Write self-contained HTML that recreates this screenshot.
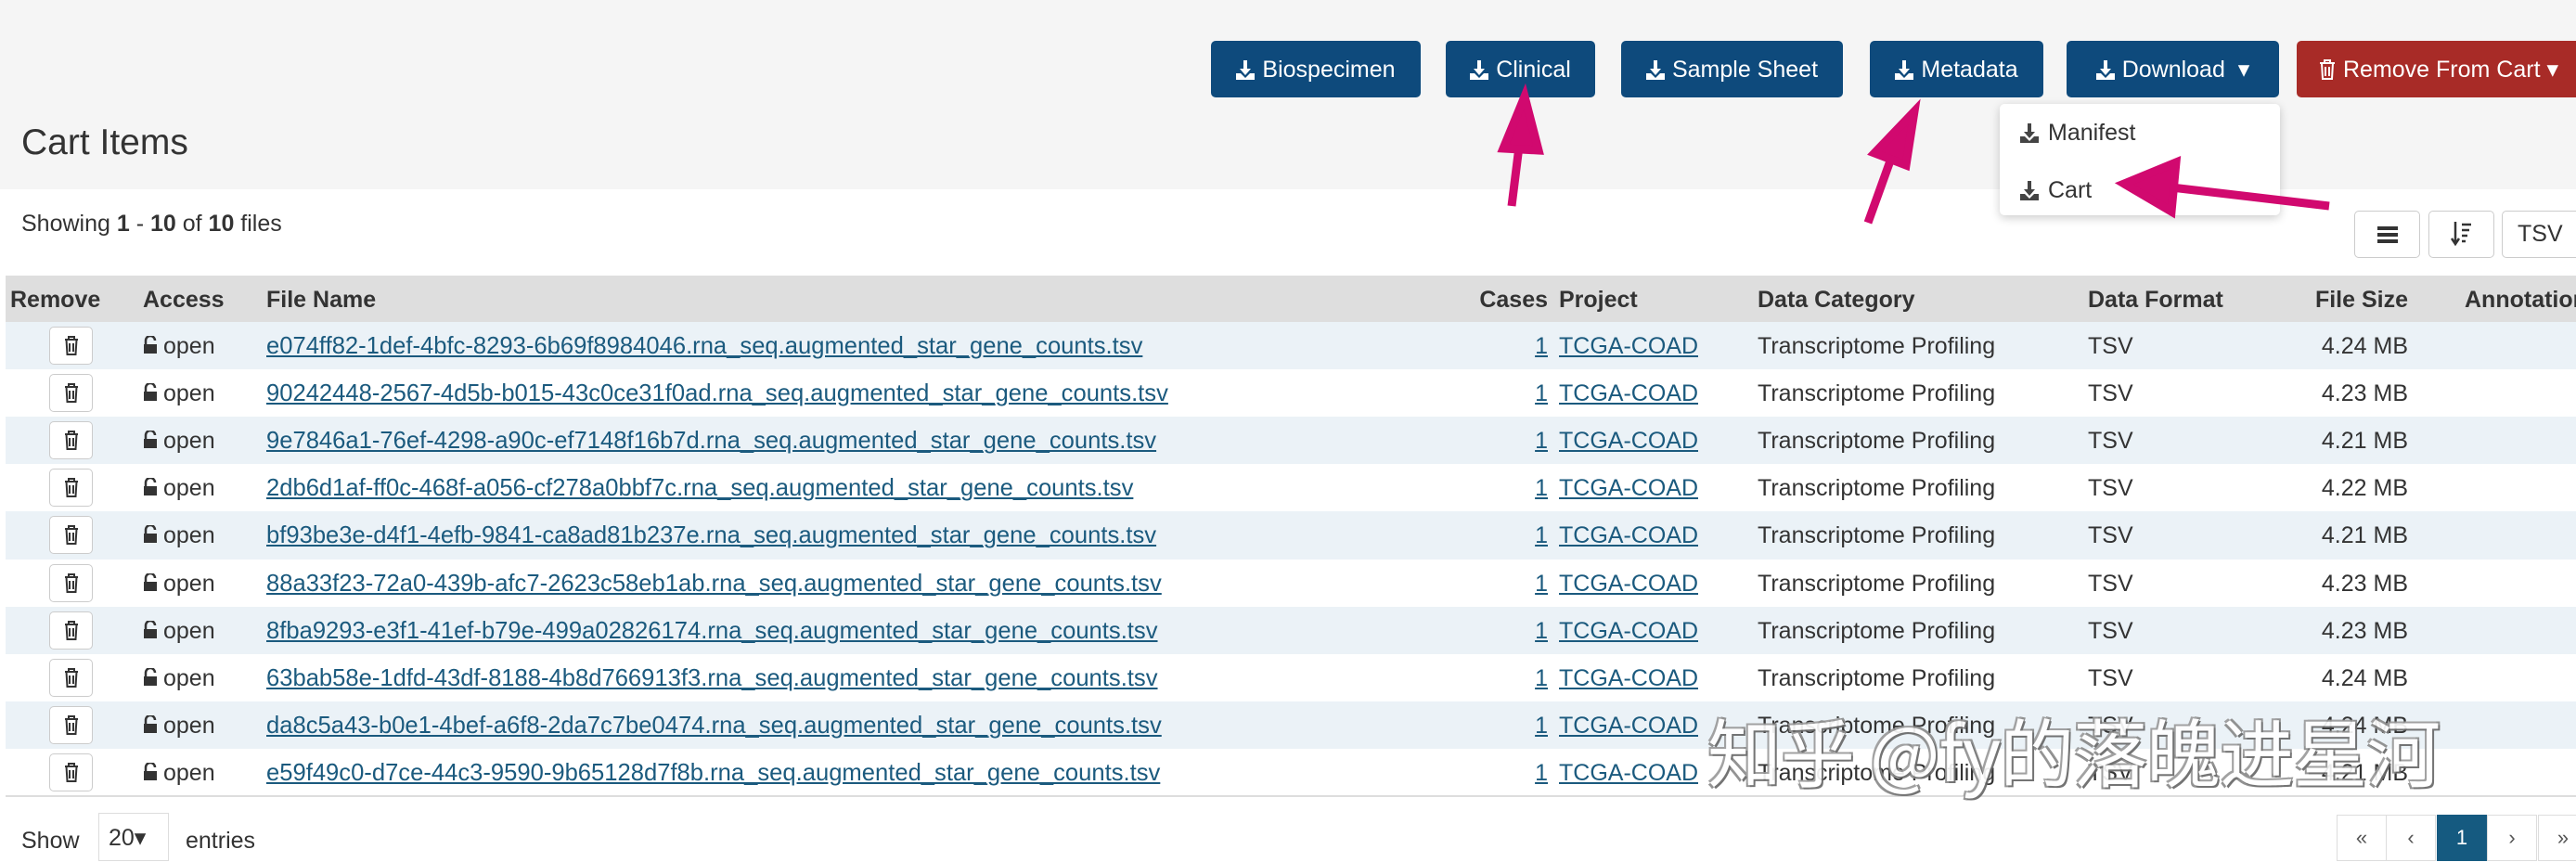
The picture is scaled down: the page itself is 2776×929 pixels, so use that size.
<!DOCTYPE html>
<html><head><meta charset="utf-8">
<style>
*{box-sizing:border-box;margin:0;padding:0}
body{width:2776px;height:925px;overflow:hidden;background:#fff;font-family:"Liberation Sans",Arial,sans-serif;color:#333;position:relative}
.top{position:absolute;left:0;top:0;width:2776px;height:204px;background:#f5f5f5}
.btn{position:absolute;top:44px;height:61px;background:#0e4a7c;color:#fff;border-radius:5px;font-size:25px;line-height:63px;text-align:center;white-space:nowrap}
.btn svg{vertical-align:-3px;margin-right:8px}
.red{background:#a82b27}
.dd{position:absolute;left:2155px;top:112px;width:302px;height:120px;background:#fff;border-radius:5px;box-shadow:0 3px 10px rgba(0,0,0,.2);font-size:25px}
.dd div{position:absolute;left:22px}
h1{position:absolute;left:23px;top:132px;font-size:39px;font-weight:normal;color:#333}
.show{position:absolute;left:23px;top:227px;font-size:25px}
.ib{position:absolute;top:227px;height:51px;border:1px solid #ccc;border-radius:5px;background:#fff;font-size:25px;line-height:49px;text-align:center}
.hdr{position:absolute;left:6px;top:297px;width:2770px;height:50px;background:#dedede}
.hd{position:absolute;top:309px;font-size:25px;font-weight:bold;color:#333}
.row{position:absolute;left:6px;width:2770px;height:51.3px}
.row.s{background:#ebf2f7}
.c{position:absolute;font-size:25px;white-space:nowrap;line-height:53px}
.fn{font-size:25.6px}
a{color:#1b5a7e;text-decoration:underline}
.tb{position:absolute;left:47px;top:5px;width:47px;height:41px;border:1px solid #ccc;border-radius:5px;background:#fff}
.tb svg{position:absolute;left:15px;top:9px}
.pg{position:absolute;top:878px;height:50px;width:54px;border:1px solid #ddd;background:#fff;text-align:center;line-height:48px;font-size:22px;color:#555}
.wm{position:absolute;left:1840px;top:750px;font-size:80px;color:#fff;font-family:"Noto Sans CJK SC",sans-serif;text-shadow:2px 2px 0 #666,-2px -2px 0 #999,2px -2px 0 #888,-2px 2px 0 #888;letter-spacing:-1px;white-space:nowrap;opacity:.9}
</style></head><body>
<div class="top"></div>
<svg width="0" height="0" style="position:absolute"><defs><g id="dl"><path d="M8 0h4v9h4l-6 7-6-7h4z" fill="currentColor"/><path d="M0 14h5l5 5 5-5h5v7H0z" fill="currentColor"/></g></defs></svg>
<div class="btn" style="left:1305px;width:226px"><svg width="20" height="21" style="color:#fff"><use href="#dl"/></svg>Biospecimen</div>
<div class="btn" style="left:1558px;width:161px"><svg width="20" height="21" style="color:#fff"><use href="#dl"/></svg>Clinical</div>
<div class="btn" style="left:1747px;width:239px"><svg width="20" height="21" style="color:#fff"><use href="#dl"/></svg>Sample Sheet</div>
<div class="btn" style="left:2015px;width:187px"><svg width="20" height="21" style="color:#fff"><use href="#dl"/></svg>Metadata</div>
<div class="btn" style="left:2227px;width:229px"><svg width="20" height="21" style="color:#fff"><use href="#dl"/></svg>Download &nbsp;▾</div>
<div class="btn red" style="left:2475px;width:320px;text-align:left;padding-left:24px"><svg width="18" height="22" style="color:#fff"><path d="M1 4h16M6 4V1h6v3M3 4l1 17h10l1-17M7 8v10M11 8v10" stroke="#fff" stroke-width="2" fill="none"/></svg>Remove From Cart ▾</div>
<div class="dd">
<div style="top:17px"><svg width="20" height="21" style="color:#444;vertical-align:-3px;margin-right:10px"><use href="#dl"/></svg>Manifest</div>
<div style="top:79px"><svg width="20" height="21" style="color:#444;vertical-align:-3px;margin-right:10px"><use href="#dl"/></svg>Cart</div>
</div>
<h1>Cart Items</h1>
<div class="show">Showing <b>1</b> - <b>10</b> of <b>10</b> files</div>
<div class="ib" style="left:2537px;width:71px"><svg width="22" height="18" style="vertical-align:-2px"><path d="M0 2h22M0 9h22M0 16h22" stroke="#333" stroke-width="4"/></svg></div>
<div class="ib" style="left:2617px;width:71px"><svg width="24" height="26" style="vertical-align:-5px"><path d="M5 0v22M1 18l4 6 4-6" stroke="#333" stroke-width="2.5" fill="none"/><path d="M12 3h10M12 9h8M12 15h6M12 21h4" stroke="#333" stroke-width="2.5"/></svg></div>
<div class="ib" style="left:2696px;width:90px;text-align:left;padding-left:16px">TSV</div>
<div class="hdr"></div>
<div class="hd" style="left:11px">Remove</div>
<div class="hd" style="left:154px">Access</div>
<div class="hd" style="left:287px">File Name</div>
<div class="hd" style="left:1578px;width:90px;text-align:right">Cases</div>
<div class="hd" style="left:1680px">Project</div>
<div class="hd" style="left:1894px">Data Category</div>
<div class="hd" style="left:2250px">Data Format</div>
<div class="hd" style="left:2440px;width:155px;text-align:right">File Size</div>
<div class="hd" style="left:2656px">Annotations</div>
<div id="rows"></div>
<div style="position:absolute;left:6px;top:857px;width:2770px;height:2px;background:#ddd"></div>
<div style="position:absolute;left:23px;top:892px;font-size:25px">Show</div>
<div style="position:absolute;left:106px;top:876px;width:76px;height:52px;border:1px solid #ddd;font-size:25px;line-height:52px;padding-left:10px">20▾</div>
<div style="position:absolute;left:200px;top:892px;font-size:25px">entries</div>
<div class="pg" style="left:2518px">«</div>
<div class="pg" style="left:2571px">‹</div>
<div class="pg" style="left:2626px;background:#155a80;color:#fff;border-color:#155a80">1</div>
<div class="pg" style="left:2680px">›</div>
<div class="pg" style="left:2735px">»</div>
<div class="wm">知乎 @fy的落魄进星河</div>
<svg style="position:absolute;left:0;top:0" width="2776" height="925">
<g stroke="#d1096f" stroke-width="9" fill="#d1096f">
<line x1="1629" y1="222" x2="1638" y2="150"/><polygon points="1643,104 1620,160 1658,162"/>
<line x1="2013" y1="240" x2="2040" y2="165"/><polygon points="2063,120 2020,165 2054,178"/>
<line x1="2510" y1="222" x2="2340" y2="202"/><polygon points="2289,198 2345,175 2340,228"/>
</g></svg>
<script>
var d=[["e074ff82-1def-4bfc-8293-6b69f8984046","4.24"],["90242448-2567-4d5b-b015-43c0ce31f0ad","4.23"],["9e7846a1-76ef-4298-a90c-ef7148f16b7d","4.21"],["2db6d1af-ff0c-468f-a056-cf278a0bbf7c","4.22"],["bf93be3e-d4f1-4efb-9841-ca8ad81b237e","4.21"],["88a33f23-72a0-439b-afc7-2623c58eb1ab","4.23"],["8fba9293-e3f1-41ef-b79e-499a02826174","4.23"],["63bab58e-1dfd-43df-8188-4b8d766913f3","4.24"],["da8c5a43-b0e1-4bef-a6f8-2da7c7be0474","4.24"],["e59f49c0-d7ce-44c3-9590-9b65128d7f8b","4.21"]];
var h="";
for(var i=0;i<10;i++){var t=347+i*51.1;
h+='<div class="row'+(i%2==0?' s':'')+'" style="top:'+t+'px"><div class="tb"><svg width="16" height="22"><path d="M1 4h14M5 4V1h6v3M2.5 4l1 16h9l1-16M6 8v9M10 8v9" stroke="#333" stroke-width="2" fill="none"/></svg></div>'+
'<div class="c" style="left:148px"><svg width="16" height="20" style="vertical-align:-1px;margin-right:6px"><path d="M3 9V5a5 5 0 0 1 10 0" stroke="#333" stroke-width="2.5" fill="none"/><rect x="1" y="9" width="14" height="10" fill="#333"/></svg>open</div>'+
'<div class="c fn" style="left:281px"><a>'+d[i][0]+'.rna_seq.augmented_star_gene_counts.tsv</a></div>'+
'<div class="c" style="left:1572px;width:90px;text-align:right"><a>1</a></div>'+
'<div class="c" style="left:1674px"><a>TCGA-COAD</a></div>'+
'<div class="c" style="left:1888px">Transcriptome Profiling</div>'+
'<div class="c" style="left:2244px">TSV</div>'+
'<div class="c" style="left:2434px;width:155px;text-align:right">'+d[i][1]+' MB</div></div>';}
document.getElementById("rows").innerHTML=h;
</script>
</body></html>
